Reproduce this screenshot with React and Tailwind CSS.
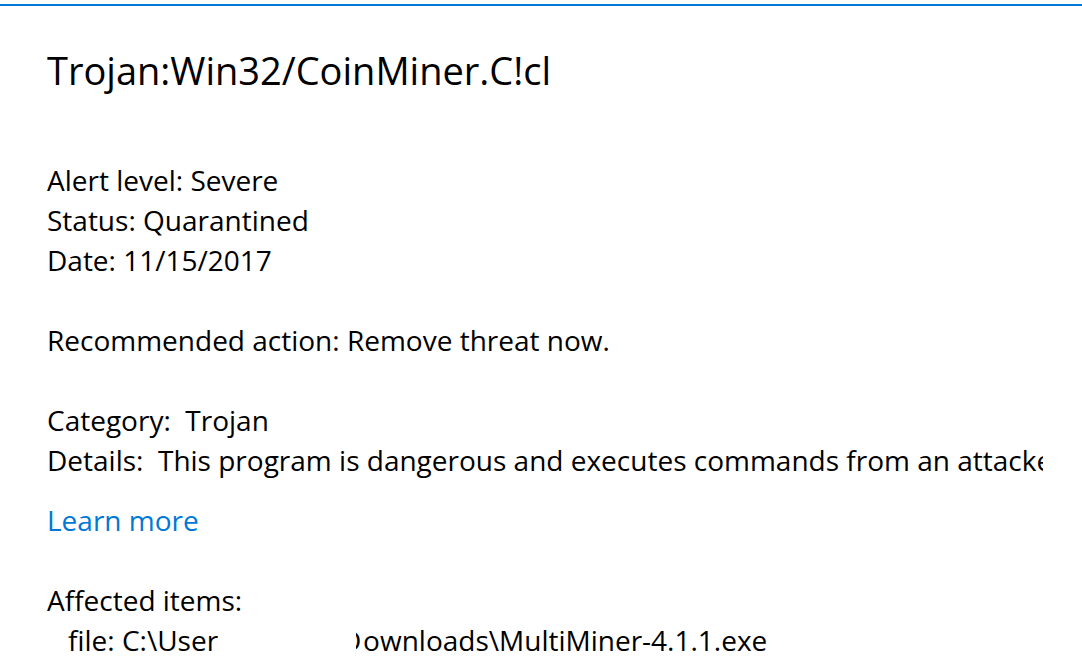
export default function App() {
  const font = { fontFamily: '"Open Sans", "Noto Sans", sans-serif' };
  return (
    <div className="w-[1082px] h-[668px] bg-white overflow-hidden" style={font}>
      <div className="h-[4px]" />
      <div className="h-[2px] bg-[#0078d7]" />
      <div className="pl-[47px] w-[1043px] overflow-hidden whitespace-nowrap text-black">
        <h1 className="mt-[40px] text-[38px] leading-[48px] font-normal">Trojan:Win32/CoinMiner.C!cl</h1>
        <div className="mt-[66px] text-[28px] leading-[40px]">
          <div>Alert level: Severe</div>
          <div>Status: Quarantined</div>
          <div>Date: 11/15/2017</div>
          <div className="mt-[40px]">Recommended action: Remove threat now.</div>
          <div className="mt-[40px]">Category:&nbsp; Trojan</div>
          <div>Details:&nbsp; This program is dangerous and executes commands from an attacker.</div>
          <div className="mt-[20px] text-[#0078d7]">Learn more</div>
          <div className="mt-[40px]">Affected items:</div>
          <div className="pl-[21px] flex">
            <span>file: C:\User</span>
            <span className="w-[138px]" />
            <span className="inline-block overflow-hidden w-[7px]">
              <span className="inline-block -ml-[15px]">D</span>
            </span>
            <span>ownloads\MultiMiner-4.1.1.exe</span>
          </div>
        </div>
      </div>
    </div>
  );
}
